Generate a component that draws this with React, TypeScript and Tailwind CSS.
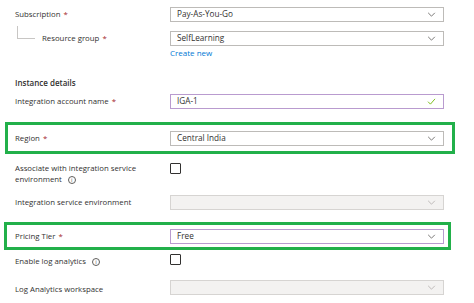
import type { ReactNode } from "react";

const FONT = { fontFamily: '"Segoe UI", "Open Sans", "Noto Sans", sans-serif' };

function Chevron({ muted = false }: { muted?: boolean }) {
  return (
    <svg width="9" height="5" viewBox="0 0 10 6" className="mr-[7px] shrink-0">
      <path
        d="M1 1l4 4 4-4"
        fill="none"
        stroke={muted ? "#b3b0ad" : "#605e5c"}
        strokeWidth="1"
      />
    </svg>
  );
}

function Check() {
  return (
    <svg width="9" height="7" viewBox="0 0 10 8" className="mr-[7px] shrink-0">
      <path d="M1 4.2l2.8 2.8L9 1" fill="none" stroke="#6bb700" strokeWidth="1" />
    </svg>
  );
}

function Info() {
  return (
    <span className="ml-[6px] inline-flex h-[8px] w-[8px] items-center justify-center rounded-full border border-[#605e5c] text-[6px] leading-none text-[#605e5c]">
      i
    </span>
  );
}

function Req() {
  return <span className="ml-[3px] text-[#a4262c]">*</span>;
}

type FieldProps = {
  value?: string;
  focused?: boolean;
  disabled?: boolean;
  valid?: boolean;
};

function Field({ value, focused, disabled, valid }: FieldProps) {
  const border = focused
    ? "border-[#b99bcf] bg-white"
    : disabled
      ? "border-[#d6d4d2] bg-[#f3f2f1]"
      : "border-[#bdbbb8] bg-white";
  return (
    <div
      className={`flex h-[15px] w-[274px] items-center justify-between border ${border}`}
    >
      <span className="pl-[6px] text-[8.2px] leading-none text-[#323130]">{value}</span>
      {valid ? <Check /> : <Chevron muted={disabled} />}
    </div>
  );
}

function Label({ children }: { children: ReactNode }) {
  return (
    <div className="w-[155px] shrink-0 text-[7.8px] leading-[11px] text-[#323130]">
      {children}
    </div>
  );
}

export default function App() {
  return (
    <div className="h-[303px] w-[474px] overflow-hidden bg-white" style={FONT}>
      <div className="flex flex-col">
        <div className="mt-[7px] flex h-[15px] items-center pl-[15px]">
          <Label>
            Subscription
            <Req />
          </Label>
          <Field value="Pay-As-You-Go" />
        </div>

        <div className="mt-[9px] flex h-[15px] items-center pl-[15px]">
          <div className="relative w-[155px] shrink-0">
            <div className="absolute left-[2px] top-[-7px] h-[13px] w-[18px] border-b border-l border-[#c8c6c4]" />
            <div className="pl-[27px] text-[7.8px] leading-[11px] text-[#323130]">
              Resource group
              <Req />
            </div>
          </div>
          <Field value="SelfLearning" />
        </div>

        <div className="ml-[170px] mt-[1px] text-[8px] leading-[11px] text-[#0078d4]">
          Create new
        </div>

        <div className="ml-[15px] mt-[19px] text-[8px] font-semibold leading-[11px] text-[#323130]">
          Instance details
        </div>

        <div className="mt-[6px] flex h-[15px] items-center pl-[15px]">
          <Label>
            Integration account name
            <Req />
          </Label>
          <Field value="IGA-1" focused valid />
        </div>

        <div className="ml-[5px] mt-[13px] flex h-[32px] w-[450px] items-center border-[3px] border-[#22b04a] pl-[7px]">
          <Label>
            Region
            <Req />
          </Label>
          <Field value="Central India" />
        </div>

        <div className="mt-[9px] flex items-start pl-[15px]">
          <Label>
            <div className="leading-[11px]">
              <div>Associate with integration service</div>
              <div className="flex items-center">
                environment
                <Info />
              </div>
            </div>
          </Label>
          <div className="h-[11px] w-[11px] rounded-[1px] border border-[#323130] bg-white" />
        </div>

        <div className="mt-[10px] flex h-[15px] items-center pl-[15px]">
          <Label>Integration service environment</Label>
          <Field disabled />
        </div>

        <div className="ml-[4px] mt-[12px] flex h-[28px] w-[447px] items-center border-[3px] border-[#22b04a] pl-[8px]">
          <Label>
            Pricing Tier
            <Req />
          </Label>
          <Field value="Free" focused />
        </div>

        <div className="mt-[4px] flex items-start pl-[15px]">
          <Label>
            <div className="flex items-center pt-[2px]">
              Enable log analytics
              <Info />
            </div>
          </Label>
          <div className="h-[11px] w-[11px] rounded-[1px] border border-[#323130] bg-white" />
        </div>

        <div className="mt-[13px] flex h-[15px] items-center pl-[15px]">
          <Label>
            <div className="pt-[3px]">Log Analytics workspace</div>
          </Label>
          <Field disabled />
        </div>
      </div>
    </div>
  );
}
